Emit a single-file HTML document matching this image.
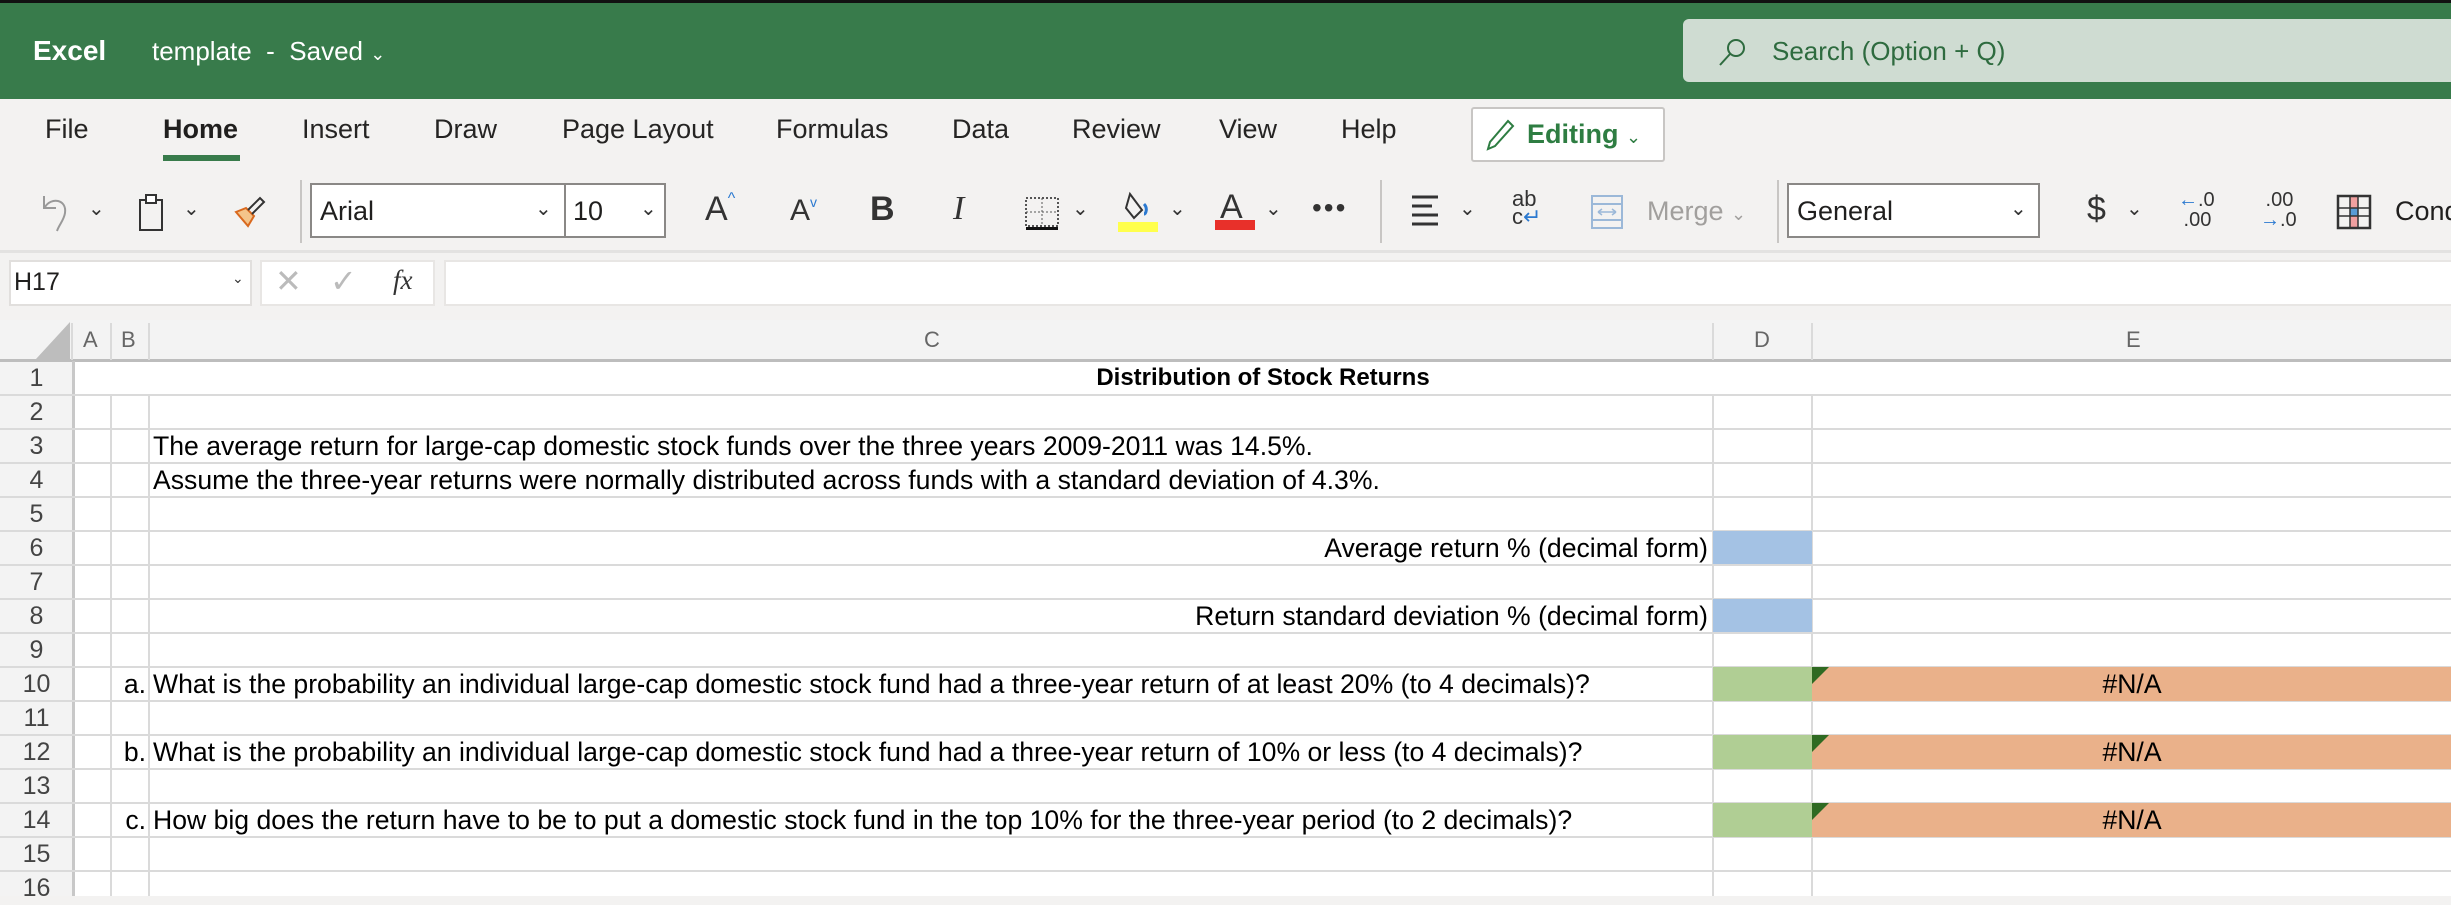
<!DOCTYPE html>
<html><head><meta charset="utf-8"><style>
*{margin:0;padding:0;box-sizing:border-box}
body{width:2451px;height:896px;overflow:hidden;background:#f3f2f1;font-family:"Liberation Sans",Arial,sans-serif;position:relative}
.a{position:absolute;white-space:nowrap}
.tab{position:absolute;top:114px;font-size:27px;color:#252423}
.cell{position:absolute;font-size:26.6px;color:#000;line-height:34px;white-space:nowrap}
.rn{position:absolute;left:0;width:73px;text-align:center;font-size:25px;color:#444;line-height:34px}
.hl{position:absolute;height:2px;background:#dadada}
.vl{position:absolute;width:2px;background:#dadada}
.ch{font-size:22px;color:#666;position:absolute;top:327px}
.chev{position:absolute;font-size:20px;color:#333}
</style></head><body>
<div class="a" style="left:0;top:0;width:2451px;height:3px;background:#111"></div>
<div class="a" style="left:0;top:3px;width:2451px;height:96px;background:#387b4b"></div>
<div class="a" style="left:33px;top:35px;font-size:28px;font-weight:bold;color:#fff">Excel</div>
<div class="a" style="left:152px;top:36px;font-size:26px;color:#fff">template&nbsp; - &nbsp;Saved <span style="font-size:18px">&#8964;</span></div>
<div class="a" style="left:1683px;top:19px;width:780px;height:63px;background:#cfdcd2;border-radius:6px"></div>
<svg class="a" style="left:1716px;top:37px" width="34" height="30" viewBox="0 0 34 30"><circle cx="20" cy="11" r="8" fill="none" stroke="#2e6b3f" stroke-width="2"/><line x1="14" y1="17" x2="4" y2="28" stroke="#2e6b3f" stroke-width="2"/></svg>
<div class="a" style="left:1772px;top:36px;font-size:26px;color:#2e6b3f">Search (Option + Q)</div>

<div class="tab" style="left:45px">File</div>
<div class="tab" style="left:163px;font-weight:bold;color:#201f1e">Home</div>
<div class="a" style="left:163px;top:155px;width:77px;height:6px;background:#387b4b"></div>
<div class="tab" style="left:302px">Insert</div>
<div class="tab" style="left:434px">Draw</div>
<div class="tab" style="left:562px">Page Layout</div>
<div class="tab" style="left:776px">Formulas</div>
<div class="tab" style="left:952px">Data</div>
<div class="tab" style="left:1072px">Review</div>
<div class="tab" style="left:1219px">View</div>
<div class="tab" style="left:1341px">Help</div>
<div class="a" style="left:1471px;top:107px;width:194px;height:55px;background:#fff;border:2px solid #c8c6c4;border-radius:3px"></div>
<svg class="a" style="left:1486px;top:118px" width="30" height="34" viewBox="0 0 30 34"><path d="M22 3l5 5L9 28l-7 3 2-7z" fill="none" stroke="#2e7d42" stroke-width="2"/></svg>
<div class="a" style="left:1527px;top:119px;font-size:27px;color:#2e7d42;font-weight:bold">Editing <span style="font-size:18px;font-weight:normal">&#8964;</span></div>

<div class="a" style="left:0;top:250px;width:2451px;height:3px;background:#e3e2e1"></div>
<svg class="a" style="left:40px;top:192px" width="36" height="40" viewBox="0 0 36 40"><path d="M4 4v12h12M5 15c6-10 22-8 20 6-1 7-6 12-8 18" fill="none" stroke="#999" stroke-width="2"/></svg>
<div class="chev" style="left:88px;top:196px">&#8964;</div>
<svg class="a" style="left:138px;top:192px" width="30" height="40" viewBox="0 0 30 40"><rect x="2" y="8" width="22" height="30" fill="none" stroke="#333" stroke-width="2"/><rect x="8" y="3" width="10" height="8" fill="#fff" stroke="#333" stroke-width="2"/></svg>
<div class="chev" style="left:183px;top:196px">&#8964;</div>
<svg class="a" style="left:232px;top:194px" width="36" height="36" viewBox="0 0 36 36"><path d="M4 18l12 14 6-10-8-8z" fill="#f4c48a" stroke="#d9691e" stroke-width="2"/><path d="M16 16l12-12 4 4-12 12" fill="none" stroke="#333" stroke-width="2"/></svg>
<div class="a" style="left:300px;top:180px;width:2px;height:63px;background:#c8c6c4"></div>
<div class="a" style="left:310px;top:183px;width:356px;height:55px;background:#fff;border:2px solid #8a8886"></div>
<div class="a" style="left:564px;top:183px;width:2px;height:55px;background:#8a8886"></div>
<div class="a" style="left:320px;top:196px;font-size:27px;color:#201f1e">Arial</div>
<div class="chev" style="left:535px;top:196px">&#8964;</div>
<div class="a" style="left:573px;top:196px;font-size:27px;color:#201f1e">10</div>
<div class="chev" style="left:640px;top:196px">&#8964;</div>
<div class="a" style="left:705px;top:190px;font-size:34px;color:#333">A<span style="font-size:16px;color:#2b79d0;vertical-align:top">^</span></div>
<div class="a" style="left:790px;top:194px;font-size:30px;color:#333">A<span style="font-size:14px;color:#2b79d0;vertical-align:top">v</span></div>
<div class="a" style="left:870px;top:190px;font-size:34px;font-weight:bold;color:#333">B</div>
<div class="a" style="left:953px;top:190px;font-size:34px;font-style:italic;color:#333;font-family:'Liberation Serif',serif">I</div>
<svg class="a" style="left:1024px;top:196px" width="36" height="36" viewBox="0 0 36 36"><rect x="2" y="2" width="32" height="28" fill="none" stroke="#555" stroke-width="2" stroke-dasharray="2 2"/><line x1="18" y1="2" x2="18" y2="30" stroke="#555" stroke-dasharray="2 2"/><line x1="2" y1="16" x2="34" y2="16" stroke="#555" stroke-dasharray="2 2"/><rect x="2" y="31" width="32" height="3" fill="#111"/></svg>
<div class="chev" style="left:1072px;top:196px">&#8964;</div>
<svg class="a" style="left:1118px;top:190px" width="42" height="42" viewBox="0 0 42 42"><path d="M12 4l12 16-8 8-8-10z" fill="none" stroke="#333" stroke-width="2"/><path d="M26 14c4 4 2 10 0 10" fill="none" stroke="#2b79d0" stroke-width="3"/><rect x="0" y="32" width="40" height="10" fill="#ffff4d"/></svg>
<div class="chev" style="left:1169px;top:196px">&#8964;</div>
<div class="a" style="left:1220px;top:188px;font-size:34px;color:#333">A</div>
<div class="a" style="left:1215px;top:220px;width:40px;height:10px;background:#e8302a"></div>
<div class="chev" style="left:1265px;top:196px">&#8964;</div>
<div class="a" style="left:1312px;top:192px;font-size:28px;color:#333;letter-spacing:2px">&#8226;&#8226;&#8226;</div>
<div class="a" style="left:1380px;top:180px;width:2px;height:63px;background:#c8c6c4"></div>
<svg class="a" style="left:1410px;top:194px" width="32" height="34" viewBox="0 0 32 34"><path d="M2 3h26M2 12h20M2 21h26M2 30h26" stroke="#333" stroke-width="3"/></svg>
<div class="chev" style="left:1459px;top:196px">&#8964;</div>
<div class="a" style="left:1512px;top:190px;font-size:22px;color:#333;line-height:18px">ab<br>c<span style="color:#2b79d0">&#8629;</span></div>
<svg class="a" style="left:1590px;top:194px" width="34" height="36" viewBox="0 0 34 36"><rect x="2" y="2" width="30" height="32" fill="none" stroke="#9bb8d8" stroke-width="2"/><path d="M2 10h30M2 26h30" stroke="#9bb8d8" stroke-width="2"/><path d="M8 18h18M8 18l4-3M8 18l4 3M26 18l-4-3M26 18l-4 3" stroke="#9bb8d8" stroke-width="1.5"/></svg>
<div class="a" style="left:1647px;top:196px;font-size:27px;color:#a19f9d">Merge <span style="font-size:18px">&#8964;</span></div>
<div class="a" style="left:1777px;top:180px;width:2px;height:63px;background:#c8c6c4"></div>
<div class="a" style="left:1787px;top:183px;width:253px;height:55px;background:#fff;border:2px solid #8a8886"></div>
<div class="a" style="left:1797px;top:196px;font-size:27px;color:#201f1e">General</div>
<div class="chev" style="left:2010px;top:196px">&#8964;</div>
<div class="a" style="left:2087px;top:190px;font-size:34px;color:#333">$</div>
<div class="chev" style="left:2126px;top:196px">&#8964;</div>
<div class="a" style="left:2178px;top:190px;font-size:20px;color:#333;line-height:20px"><span style="color:#2b79d0">&#8592;</span>.0<br>&nbsp;.00</div>
<div class="a" style="left:2260px;top:190px;font-size:20px;color:#333;line-height:20px">&nbsp;.00<br><span style="color:#2b79d0">&#8594;</span>.0</div>
<svg class="a" style="left:2336px;top:194px" width="36" height="36" viewBox="0 0 36 36"><rect x="14" y="2" width="8" height="32" fill="#f1a0a0"/><rect x="14" y="14" width="8" height="8" fill="#5a9bd5"/><rect x="2" y="2" width="32" height="32" fill="none" stroke="#333" stroke-width="2.5"/><path d="M14 2v32M22 2v32M2 14h32M2 22h32" stroke="#333" stroke-width="1.5"/></svg>
<div class="a" style="left:2395px;top:196px;font-size:27px;color:#201f1e">Conditional</div>

<div class="a" style="left:0;top:253px;width:2451px;height:65px;background:#f3f2f1"></div>
<div class="a" style="left:9px;top:260px;width:243px;height:46px;background:#fff;border:2px solid #e1dfdd"></div>
<div class="a" style="left:14px;top:268px;font-size:25px;color:#201f1e">H17</div>
<div class="a" style="left:232px;top:270px;font-size:14px;color:#333">&#8964;</div>
<div class="a" style="left:260px;top:260px;width:175px;height:46px;background:#fff;border:2px solid #e8e6e4"></div>
<div class="a" style="left:275px;top:262px;font-size:32px;color:#bbb">&#10005;</div>
<div class="a" style="left:330px;top:262px;font-size:32px;color:#bbb">&#10003;</div>
<div class="a" style="left:393px;top:265px;font-size:27px;color:#333;font-style:italic;font-family:'Liberation Serif',serif">fx</div>
<div class="a" style="left:444px;top:260px;width:2010px;height:46px;background:#fff;border:2px solid #e8e6e4"></div>

<div class="a" style="left:0;top:320px;width:2451px;height:41px;background:#f3f3f3"></div>
<svg class="a" style="left:36px;top:322px" width="34" height="37"><path d="M34 0v37H0z" fill="#bdbdbd"/></svg>
<div class="a" style="left:0;top:359px;width:2451px;height:3px;background:#bdbdbd"></div>
<div class="vl" style="left:72px;top:361px;height:535px;width:3px;background:#c8c8c8"></div>
<div class="vl" style="left:71px;top:323px;height:37px"></div>
<div class="vl" style="left:110px;top:323px;height:37px"></div>
<div class="vl" style="left:148px;top:323px;height:37px"></div>
<div class="vl" style="left:1712px;top:323px;height:37px"></div>
<div class="vl" style="left:1811px;top:323px;height:37px"></div>
<div class="ch" style="left:83px">A</div>
<div class="ch" style="left:121px">B</div>
<div class="ch" style="left:924px">C</div>
<div class="ch" style="left:1754px">D</div>
<div class="ch" style="left:2126px">E</div>

<div class="a" style="left:0;top:362px;width:72px;height:534px;background:#f3f3f3"></div>
<div class="a" style="left:75px;top:362px;width:2376px;height:534px;background:#fff"></div>
<div class="vl" style="left:110px;top:395px;height:501px"></div>
<div class="vl" style="left:148px;top:395px;height:501px"></div>
<div class="vl" style="left:1712px;top:395px;height:501px"></div>
<div class="vl" style="left:1811px;top:395px;height:501px"></div>
<div class="hl" style="left:0;top:394px;width:2451px"></div>
<div class="hl" style="left:0;top:428px;width:2451px"></div>
<div class="hl" style="left:0;top:462px;width:2451px"></div>
<div class="hl" style="left:0;top:496px;width:2451px"></div>
<div class="hl" style="left:0;top:530px;width:2451px"></div>
<div class="hl" style="left:0;top:564px;width:2451px"></div>
<div class="hl" style="left:0;top:598px;width:2451px"></div>
<div class="hl" style="left:0;top:632px;width:2451px"></div>
<div class="hl" style="left:0;top:666px;width:2451px"></div>
<div class="hl" style="left:0;top:700px;width:2451px"></div>
<div class="hl" style="left:0;top:734px;width:2451px"></div>
<div class="hl" style="left:0;top:768px;width:2451px"></div>
<div class="hl" style="left:0;top:802px;width:2451px"></div>
<div class="hl" style="left:0;top:836px;width:2451px"></div>
<div class="hl" style="left:0;top:870px;width:2451px"></div>

<div class="rn" style="top:361px">1</div><div class="rn" style="top:395px">2</div><div class="rn" style="top:429px">3</div><div class="rn" style="top:463px">4</div><div class="rn" style="top:497px">5</div><div class="rn" style="top:531px">6</div><div class="rn" style="top:565px">7</div><div class="rn" style="top:599px">8</div><div class="rn" style="top:633px">9</div><div class="rn" style="top:667px">10</div><div class="rn" style="top:701px">11</div><div class="rn" style="top:735px">12</div><div class="rn" style="top:769px">13</div><div class="rn" style="top:803px">14</div><div class="rn" style="top:837px">15</div><div class="rn" style="top:871px">16</div>

<div class="a" style="left:1713px;top:531px;width:99px;height:33px;background:#a4c2e4"></div>
<div class="a" style="left:1713px;top:599px;width:99px;height:33px;background:#a4c2e4"></div>
<div class="a" style="left:1713px;top:667px;width:99px;height:34px;background:#b0ce94"></div>
<div class="a" style="left:1713px;top:735px;width:99px;height:34px;background:#b0ce94"></div>
<div class="a" style="left:1713px;top:803px;width:99px;height:34px;background:#b0ce94"></div>
<div class="a" style="left:1812px;top:667px;width:640px;height:34px;background:#eab18a"></div>
<div class="a" style="left:1812px;top:735px;width:640px;height:34px;background:#eab18a"></div>
<div class="a" style="left:1812px;top:803px;width:640px;height:34px;background:#eab18a"></div>
<svg class="a" style="left:1812px;top:667px" width="17" height="17"><path d="M0 0h17L0 17z" fill="#2f6a22"/></svg>
<svg class="a" style="left:1812px;top:735px" width="17" height="17"><path d="M0 0h17L0 17z" fill="#2f6a22"/></svg>
<svg class="a" style="left:1812px;top:803px" width="17" height="17"><path d="M0 0h17L0 17z" fill="#2f6a22"/></svg>

<div class="cell" style="left:75px;top:361px;width:2376px;text-align:center;font-weight:bold;font-size:24px">Distribution of Stock Returns</div>
<div class="cell" style="left:153px;top:429px">The average return for large-cap domestic stock funds over the three years 2009-2011 was 14.5%.</div>
<div class="cell" style="left:153px;top:463px">Assume the three-year returns were normally distributed across funds with a standard deviation of 4.3%.</div>
<div class="cell" style="right:743px;top:531px">Average return % (decimal form)</div>
<div class="cell" style="right:743px;top:599px">Return standard deviation % (decimal form)</div>
<div class="cell" style="right:2305px;top:667px">a.</div>
<div class="cell" style="left:153px;top:667px">What is the probability an individual large-cap domestic stock fund had a three-year return of at least 20% (to 4 decimals)?</div>
<div class="cell" style="right:2305px;top:735px">b.</div>
<div class="cell" style="left:153px;top:735px">What is the probability an individual large-cap domestic stock fund had a three-year return of 10% or less (to 4 decimals)?</div>
<div class="cell" style="right:2305px;top:803px">c.</div>
<div class="cell" style="left:153px;top:803px">How big does the return have to be to put a domestic stock fund in the top 10% for the three-year period (to 2 decimals)?</div>
<div class="cell" style="left:1812px;top:667px;width:640px;text-align:center">#N/A</div>
<div class="cell" style="left:1812px;top:735px;width:640px;text-align:center">#N/A</div>
<div class="cell" style="left:1812px;top:803px;width:640px;text-align:center">#N/A</div>
</body></html>
